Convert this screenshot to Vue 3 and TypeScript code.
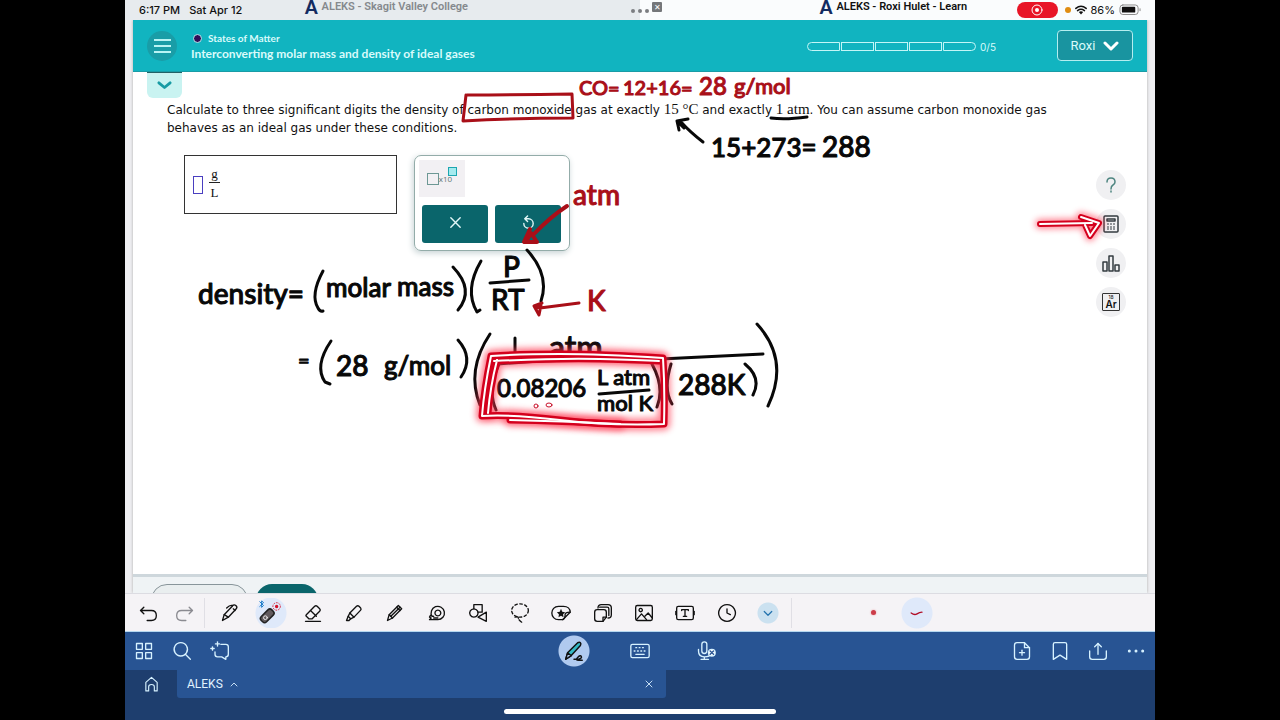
<script setup lang="ts">
import { ref } from 'vue'

interface Tool { name: string; paths: string[]; active?: boolean }

const answer = ref('')

const pens: Tool[] = [
  { name: 'Pen', paths: ['M3 21l2-7L15 3.500a2.500 2.500 0 0 1 4.500 3.500L10 17z', 'M5 14l5 3', 'M15 3c-3-1-5 1-7 3', 'M16 7l2 2'] },
  { name: 'Laser pointer', paths: [], active: true },
  { name: 'Eraser', paths: ['M7 19l-3-3q-1-1 0-2L14 4q1.500-1.500 3 0l3 3q1.500 1.500 0 3l-9 9H7z', 'M9 9l7 7', 'M3 22h18'] },
  { name: 'Highlighter', paths: ['M7 12l8-8q1.500-1.500 3 0l2 2q1 1.500 0 2.500L12 17z', 'M7 12l-2 4 3 3 4-2', 'M5 16l-2 5h3l2-2'] },
  { name: 'Pencil', paths: ['M3 21l2-7L16 3l4 4L9 18z', 'M5 14l4 4', 'M7 16L18 5', 'M14 5l4 4'] },
  { name: 'Tape', paths: ['M6 16a8 8 0 1 1 7 4H3l2-2-2-1 1-2 4 1', 'M13 8.500a3.500 3.500 0 1 0 .1 0z', 'M8 18h5'] },
  { name: 'Shapes', paths: ['M7 7a5 5 0 1 0 .1 0z', 'M7 7V2h10v9h-5', 'M22 11v11l-10-5z'] },
  { name: 'Lasso', paths: [] },
  { name: 'Sticker', paths: ['M14 20H9C4 20 1 16 1 12s3-8 8-8h6c5 0 8 3 8 7z', 'M23 11c-4 0-7 1-6 4 0 2-1 4-3 5'] },
  { name: 'Sticky notes', paths: ['M5 8h8q3 0 3 3v6l-4 5H5q-3 0-3-3v-8q0-3 3-3z', 'M12 22v-5h4', 'M6 6q0-4 4-4h8q4 0 4 4v8q0 4-4 4', 'M8 5h9q2 0 2 2v8'] },
  { name: 'Image', paths: ['M4 3h16q2 0 2 2v14q0 2-2 2H4q-2 0-2-2V5q0-2 2-2z', 'M8 6.500a2 2 0 1 0 .1 0z', 'M3 20l6-7 6 7', 'M13 16l4-4 5 6'] },
  { name: 'Text box', paths: ['M4 4h16q2 0 2 2v12q0 2-2 2H4q-2 0-2-2V6q0-2 2-2z', 'M8 9V8h8v1', 'M12 8v8', 'M10 16h4', 'M1 10v4', 'M23 10v4'] },
  { name: 'Timer', paths: ['M12 2a10 10 0 1 0 .1 0z', 'M12 7v5l4 2'] },
]

const barLeft: Tool[] = [
  { name: 'Overview', paths: ['M3 3h7v7H3z', 'M14 3h7v7h-7z', 'M3 14h7v7H3z', 'M14 14h7v7h-7z'] },
  { name: 'Search', paths: ['M10.500 2a8 8 0 1 0 .1 0z', 'M16 16l6 6'] },
  { name: 'Assistant', paths: ['M13 4h6q3 0 3 3v9q0 3-3 3v3l-5-3H9q-3 0-3-3v-3', 'M9 1v5', 'M6.500 3.500h5', 'M3 7v4', 'M1 9h4'] },
]
const barRight: Tool[] = [
  { name: 'Add page', paths: ['M6 2h9l6 6v11q0 3-3 3H6q-3 0-3-3V5q0-3 3-3z', 'M15 2v6h6', 'M12 11v6', 'M9 14h6'] },
  { name: 'Bookmark', paths: ['M6 2h12q2 0 2 2v18l-8-5-8 5V4q0-2 2-2z'] },
  { name: 'Share', paths: ['M2 12v7q0 3 3 3h14q3 0 3-3v-7', 'M12 16V3', 'M8 7l4-4 4 4'] },
]
const laserBox = [
  'M491 356Q520 354 560 354T663 358Q665 388 664 424Q610 426 560 420T482 416Q484 390 491 356',
  'M494 361Q560 358 600 359T659 361M497 360Q490 388 488 413M510 420Q560 421 620 424',
]
const laserArrow = 'M6 23L58 22M47 16L65 22L56 35L51 24'
</script>

<template>
  <div class="device">
    <header class="status">
      <div class="browser-tab idle"><b class="logo">A</b><span>ALEKS - Skagit Valley College</span></div>
      <div class="browser-tab"><b class="logo">A</b><span>ALEKS - Roxi Hulet - Learn</span></div>
      <div class="clock"><span>6:17 PM</span><span>Sat Apr 12</span></div>
      <div class="seam"><i></i><i></i><i></i><button aria-label="Close tab">✕</button></div>
      <div class="system">
        <span class="record"><svg viewBox="0 0 12 12"><circle cx="6" cy="6" r="5" fill="none" stroke="#fff" /><circle cx="6" cy="6" r="2" fill="#fff" /></svg></span>
        <i class="mic-dot"></i>
        <svg class="wifi" viewBox="0 0 14 11"><path d="M1 4q6-5 12 0M3 6.500q4-3 8 0" fill="none" stroke="#111" stroke-width="1.800" /><path d="M4.500 8.200q2.500-1.600 5 0L7 11z" fill="#111" /></svg>
        <span>86%</span>
        <svg class="battery" viewBox="0 0 23 12"><rect x="1" y="1" width="19" height="10" rx="3" fill="none" stroke="#888" /><rect x="3" y="3" width="14" height="6" rx="1" fill="#111" /><path d="M22 5v2" stroke="#888" /></svg>
      </div>
    </header>

    <main class="page">
      <div class="topic-bar">
        <button class="menu" aria-label="Menu"><i></i><i></i><i></i></button>
        <div class="topic">
          <span class="chapter"><i></i>States of Matter</span>
          <h1>Interconverting molar mass and density of ideal gases</h1>
        </div>
        <div class="progress"><i v-for="n in 5" :key="n"></i><span>0/5</span></div>
        <button class="user">Roxi <svg viewBox="0 0 16 12"><path d="M2 3l6 6 6-6" /></svg></button>
      </div>

      <section class="problem">
        <button class="pull" aria-label="Expand"><svg viewBox="0 0 16 12"><path d="M2 3l6 5 6-5" /></svg></button>
        <p class="question">
          Calculate to three significant digits the density of carbon monoxide gas at exactly
          <span class="math">15 °C</span> and exactly <span class="math">1 atm</span>. You can assume carbon monoxide gas
          behaves as an ideal gas under these conditions.
        </p>
        <div class="workspace">
          <label class="answer">
            <input v-model="answer" aria-label="Density in grams per litre" />
            <span class="unit"><span>g</span><span>L</span></span>
          </label>
          <div class="keypad">
            <button class="sci" aria-label="Scientific notation"><i></i><span>x10</span><i class="exp"></i></button>
            <div class="keys">
              <button aria-label="Clear"><svg viewBox="0 0 16 16"><path d="M3 3l10 10M13 3L3 13" /></svg></button>
              <button aria-label="Undo"><svg viewBox="0 0 16 16"><path d="M3 9a5 5 0 1 0 5-5H4M7 1L4 4l3 3" /></svg></button>
            </div>
          </div>
          <nav class="side">
            <button aria-label="Help"><svg viewBox="0 0 18 18"><path class="thin" d="M5 6q0-4 4-4t4 4q0 2-2 3t-2 4M9 15v1" /></svg></button>
            <button aria-label="Calculator">
              <svg viewBox="0 0 18 18"><rect x="2" y="1" width="14" height="16" rx="1" /><rect x="5" y="4" width="8" height="2" /><path stroke-linecap="butt" stroke-dasharray="2 1" d="M5 9h8M5 12h8M5 14h8" class="keydots" /></svg>
              <svg class="laser-arrow" viewBox="0 0 76 44">
                <path class="glow" :d="laserArrow" /><path class="beam" :d="laserArrow" /><path class="core" :d="laserArrow" />
              </svg>
            </button>
            <button aria-label="Data"><svg viewBox="0 0 18 18"><path d="M1 8h4v9H1zM7 2h4v15H7zM13 11h4v6h-4z" /></svg></button>
            <button aria-label="Periodic table"><span class="element"><small>18</small><b>Ar</b></span></button>
          </nav>
        </div>
      </section>

      <footer class="actions"><button aria-label="Explanation"></button><button class="check" aria-label="Check"></button></footer>
    </main>

    <div class="tools">
      <div class="history">
        <button aria-label="Undo stroke"><svg viewBox="0 0 24 24"><path d="M7 5L3 9l4 4M3 9h13q6 0 6 6t-6 6h-5" /></svg></button>
        <button class="off" aria-label="Redo stroke"><svg viewBox="0 0 24 24"><path d="M17 5l4 4-4 4M21 9H8q-6 0-6 6t6 6h5" /></svg></button>
      </div>
      <div class="pens">
        <button v-for="t in pens" :key="t.name" :class="{ active: t.active }" :aria-label="t.name">
          <svg v-if="t.name === 'Laser pointer'" class="big" viewBox="0 0 32 32">
            <rect x="4" y="15" width="16" height="8" rx="3" transform="rotate(-45 12 19)" fill="#625b5e" stroke="#222" />
            <circle cx="10" cy="21" r="2" fill="none" stroke="#eee" stroke-width="1" />
            <circle cx="22" cy="9" r="1" fill="#d3122a" stroke="#d3122a" />
            <circle cx="22" cy="9" r="4" stroke="#d3122a" stroke-width="1" stroke-dasharray="1 2" />
            <path d="M4 4l4 4-2 2V3l2 2-4 4" stroke="#1578c8" stroke-width="1" />
          </svg>
          <svg v-else viewBox="0 0 24 24">
            <path v-for="p in t.paths" :key="p" :d="p" />
            <template v-if="t.name === 'Lasso'"><ellipse cx="12" cy="9" rx="10" ry="8" stroke-dasharray="3 3" /><path d="M6 17q4-1 4 1t4 5" stroke-dasharray="5 2" /></template>
            <path v-if="t.name === 'Sticker'" d="M12 7l1.500 3.500 3.500.5-2.500 2.500.5 3.500-3-1.700L9 17l.5-3.500L7 11l3.500-.5z" class="solid" />
          </svg>
        </button>
        <button class="more" aria-label="More tools"><svg viewBox="0 0 24 24"><path d="M7 10l5 5 5-5" /></svg></button>
      </div>
      <div class="lasers">
        <button aria-label="Dot laser"><i></i></button>
        <button class="active" aria-label="Line laser"><svg viewBox="0 0 24 24"><path d="M5 12q4 3 7 1t6-2" /></svg></button>
      </div>
    </div>

    <div class="app-bar">
      <div class="group"><button v-for="t in barLeft" :key="t.name" :aria-label="t.name"><svg viewBox="0 0 24 24"><path v-for="p in t.paths" :key="p" :d="p" /></svg></button></div>
      <div class="group modes">
        <button class="pen-mode" aria-label="Pen mode"><svg viewBox="0 0 24 24"><path d="M3 21l2-7L16 3q2-1 3 0t0 3L9 17z" fill="#35b9c4" /><path d="M3 21l2-7 4 3z" fill="#b4cdf3" /><path d="M12 21h5q4-1 3-3t-4 1 1 3 4 0" /></svg></button>
        <button aria-label="Keyboard mode"><svg viewBox="0 0 24 24"><rect x="1" y="4" width="22" height="16" rx="2" /><path d="M7 8h11M5 12h14" stroke-dasharray="1 3" /><path d="M7 16h10" /></svg></button>
        <button aria-label="Microphone off"><svg viewBox="0 0 24 24"><rect x="7" y="1" width="6" height="14" rx="3" /><path d="M3 10v2q0 7 7 7t7-3M10 19v3M6 22h9" /><circle cx="19" cy="14" r="4" fill="#fff" /><path d="M17 12l4 4M21 12l-4 4" class="cut" /></svg></button>
      </div>
      <div class="group end">
        <button v-for="t in barRight" :key="t.name" :aria-label="t.name"><svg viewBox="0 0 24 24"><path v-for="p in t.paths" :key="p" :d="p" /></svg></button>
        <button aria-label="More"><svg viewBox="0 0 24 24" class="dots"><circle cx="4" cy="12" r="1" /><circle cx="12" cy="12" r="1" /><circle cx="20" cy="12" r="1" /></svg></button>
      </div>
    </div>

    <div class="doc-tabs">
      <button class="home" aria-label="Home"><svg viewBox="0 0 24 24"><path d="M4 9l8-7 8 7v12h-4v-6q0-3-4-3t-4 3v6H4z" /></svg></button>
      <div class="doc">
        <button>ALEKS <svg viewBox="0 0 10 8"><path d="M2 6l3-3 3 3" /></svg></button>
        <button class="close" aria-label="Close ALEKS"><svg viewBox="0 0 10 10"><path d="M2 2l6 6M8 2L2 8" /></svg></button>
      </div>
      <i class="home-bar"></i>
    </div>

    <svg class="ink" viewBox="125 0 1030 560">
      <g class="dark">
        <path d="M771 118Q785 120 807 117" />
        <path d="M703 142Q690 132 681 122M679 130L677 121L688 119M677 121L684 128" />
        <text x="711" y="157" class="m">15+273=</text><text x="822" y="157" class="l">288</text>
        <text x="198" y="304" class="l">density=</text>
        <path d="M323 271Q310 295 318 308Q320 312 323 311" /><text x="326" y="297" class="m">molar</text>
        <text x="397" y="296" class="m">mass</text><path d="M453 267Q475 290 458 310" />
        <path d="M481 261Q464 290 477 312L480 310" /><text x="503" y="277" class="l">P</text>
        <path d="M490 283L529 280" /><text x="491" y="310" class="l">RT</text>
        <path d="M527 250Q550 275 541 301" />
        <text x="298" y="367" class="s">=</text>
        <path d="M331 341Q314 366 325 382L330 384" /><text x="336" y="376" class="l">28</text><text x="384" y="375" class="m">g/mol</text>
        <path d="M458 340Q474 358 461 377M490 334Q466 370 480 405" />
        <path d="M515 338L515 356" /><text x="549" y="359" class="xl">atm</text>
        <path d="M497 364Q570 358 640 360L763 354" />
        <path d="M499 364Q487 390 496 410M652 364Q665 388 657 407M671 364Q663 390 672 404" />
        <text x="497" y="397" class="n">0.08206</text>
        <text x="597" y="385" class="t">L atm</text><path d="M599 394L649 390" /><text x="597" y="411" class="t">mol K</text>
        <text x="678" y="395" class="l">288K</text>
        <path d="M745 364Q762 378 753 395M757 324Q790 360 768 406" />
      </g>
      <g class="red">
        <path d="M467 95Q520 95 572 94L573 118Q520 118 463 121L466 95" />
        <text x="579" y="95" class="s">CO=</text><text x="623" y="95" class="s">12+16=</text><text x="699" y="95" class="n">28</text><text x="734" y="94" class="t">g/mol</text>
        <path d="M567 206Q550 217 533 235M530 229L524 242L537 242L531 233L527 240" class="heavy" />
        <text x="573" y="205" class="l">atm</text>
        <path d="M579 303L540 308M542 303L534 306L539 315L541 305L537 308" /><text x="587" y="311" class="l">K</text>
      </g>
      <path v-for="d in laserBox" :key="d" class="glow" :d="d" />
      <path v-for="d in laserBox" :key="d" class="beam" :d="d" />
      <path v-for="d in laserBox" :key="d" class="core" :d="d" />
      <g class="rings"><circle cx="536" cy="406" r="2" /><ellipse cx="549" cy="405" rx="3" ry="2" /></g>
    </svg>
  </div>
</template>

<style>
body { margin: 0; background: #000; }
</style>

<style scoped>
* { box-sizing: border-box; }
button { border: 0; padding: 0; margin: 0; background: none; font: inherit; color: inherit; display: flex; align-items: center; justify-content: center; cursor: pointer; }
svg { fill: none; stroke-linecap: round; stroke-linejoin: round; }
.device { position: relative; min-height: 100vh; margin: 0 125px; display: flex; flex-direction: column; background: #f0f0f3; overflow: hidden; font-family: Inter, "Liberation Sans", sans-serif; color: #111; }

.status { position: relative; display: flex; height: 20px; padding: 0 8px; background: linear-gradient(90deg, #e7ebee 50%, #fafcfd 50%); }
.browser-tab { flex: 1; display: flex; align-items: flex-start; justify-content: center; gap: 4px; font: 600 11px/13px Roboto, sans-serif; }
.browser-tab.idle { color: #85898d; }
.logo { font: 900 18px/14px Lato, sans-serif; color: #132b60; }
.clock { position: absolute; left: 14px; top: 3px; display: flex; gap: 9px; font: 500 11px/14px Inter, sans-serif; }
.seam { position: absolute; left: calc(50% - 9px); top: 1px; display: flex; align-items: center; gap: 3px; }
.seam i { width: 4px; height: 4px; margin-top: 8px; border-radius: 50%; background: #7b7e81; }
.seam button { width: 10px; height: 10px; background: #74777a; color: #fff; font-size: 8px; line-height: 10px; border-radius: 1px; }
.system { position: absolute; right: 14px; top: 2px; height: 16px; display: flex; align-items: center; gap: 4px; font-size: 11px; }
.record { width: 41px; height: 16px; margin-right: 3px; border-radius: 8px; background: #e81527; display: flex; align-items: center; justify-content: center; }
.record svg { width: 12px; }
.mic-dot { width: 6px; height: 6px; border-radius: 50%; background: #e08d12; }
.wifi { width: 12px; }
.battery { width: 22px; }

.page { flex: 1; margin: 0 8px; display: flex; flex-direction: column; background: #fff; box-shadow: 0 0 3px #aaa; }
.topic-bar { height: 52px; background: #11b4c0; color: #d9fbfb; display: flex; align-items: center; padding: 0 14px; border-bottom: 1px solid #199ca6; }
.menu { width: 30px; height: 30px; border-radius: 50%; background: #199da7; flex-direction: column; gap: 4px; }
.menu i { width: 17px; height: 2px; background: #b9f4f4; }
.topic { margin: 2px 0 0 14px; font-family: Lato, sans-serif; font-weight: 700; }
.chapter { display: flex; align-items: center; gap: 6px; font-size: 10px; line-height: 15px; margin-left: 2px; }
.chapter i { width: 9px; height: 9px; border-radius: 50%; background: #300d56; border: 1px solid #b5e9ee; }
h1 { margin: 0; font-size: 12px; line-height: 16px; font-weight: 700; }
.progress { margin: 2px 61px 0 auto; display: flex; gap: 1px; align-items: center; font: 10px/14px Inter, sans-serif; }
.progress i { width: 33px; height: 9px; border: 1px solid #c4f6f7; }
.progress i:first-child { border-radius: 5px 0 0 5px; }
.progress i:nth-child(5) { border-radius: 0 5px 5px 0; }
.progress span { margin-left: 3px; }
.user { width: 76px; height: 31px; gap: 8px; background: #1994a0; border: 1px solid #b4eef0; border-radius: 4px; font: 13px/16px Roboto, sans-serif; }
.user svg { width: 16px; stroke: #fff; stroke-width: 3; }

.problem { flex: 1; }
.pull { width: 35px; height: 26px; margin-left: 14px; background: #c9f3f1; border-top: 1px solid #236267; border-radius: 0 0 6px 6px; }
.pull svg { width: 15px; stroke: #189ba4; stroke-width: 3; }
.question { margin: 3px 90px 0 34px; font: 12px/18px "DejaVu Sans", Verdana, sans-serif; color: #111; }
.math { font: 15px/16px "Liberation Serif", serif; }
.workspace { display: flex; align-items: flex-start; margin: 18px 21px 0 51px; }
.answer { width: 213px; height: 59px; border: 1px solid #333; display: flex; align-items: center; padding-left: 8px; gap: 6px; }
.answer input { width: 10px; height: 18px; padding: 0; border: 1px solid #4a3fc0; background: #fff; outline: 0; }
.unit { display: flex; flex-direction: column; width: 11px; text-align: center; font: 13px/20px "Liberation Serif", serif; }
.unit span:first-child { border-bottom: 1px solid #222; line-height: 16px; }
.keypad { width: 156px; margin-left: 17px; padding: 4px 8px 7px 7px; border: 1px solid #93aca9; border-radius: 7px; box-shadow: -1px 2px 6px #c6d2d4; }
.sci { width: 46px; height: 37px; margin-left: -3px; background: #f2f0f3; font: 8px/10px "Open Sans", sans-serif; color: #5c7472; }
.sci i { width: 12px; height: 12px; border: 1px solid #6d9894; }
.sci .exp { width: 9px; height: 9px; margin: -14px 0 0 -4px; border-color: #1ca6b0; background: #a4eaee; }
.keys { display: flex; gap: 7px; margin-top: 8px; }
.keys button { flex: 1; height: 38px; padding-bottom: 3px; background: #0a656b; border-radius: 3px; }
.keys svg { width: 15px; stroke: #e2f7f7; stroke-width: 1.500; }
.side { margin: 15px 0 0 auto; display: flex; flex-direction: column; gap: 9px; }
.side button { position: relative; width: 30px; height: 30px; border-radius: 50%; background: #f0f0f2; }
.side svg { width: 18px; stroke: #333b40; stroke-width: 1.500; }
.side .thin { stroke: #4e8580; }
.keydots { stroke-width: 1; }
.side .laser-arrow { position: absolute; right: 16px; top: -8px; width: 76px; height: 44px; overflow: visible; }
.element { width: 18px; height: 18px; border: 1px solid #333; border-radius: 1px; display: flex; flex-direction: column; align-items: center; }
.element small { font-size: 5px; line-height: 6px; }
.element b { font-size: 10px; line-height: 9px; font-weight: 600; }
.glow { fill: none; stroke: #ff3850; stroke-width: 13; filter: blur(3px); opacity: .6; }
.laser-arrow .glow { stroke: #ff3850; stroke-width: 10; }
.beam { fill: none; stroke: #d4001d; stroke-width: 7; }
.laser-arrow .beam { stroke: #d4001d; stroke-width: 6; }
.core { fill: none; stroke: #fff; stroke-width: 2; }
.laser-arrow .core { stroke: #fff; stroke-width: 2; }

.actions { height: 19px; padding: 7px 18px 0; border-top: 3px solid #ced7dc; background: #eff3f5; display: flex; gap: 8px; overflow: hidden; }
.actions button { width: 97px; height: 32px; border: 1px solid #88959a; border-radius: 16px; background: #e9eeef; }
.actions .check { width: 62px; background: #0a656b; border: 0; }

.tools { height: 39px; display: flex; align-items: center; background: #f5f3f6; border-top: 1px solid #dcdce2; border-bottom: 1px solid #b5d7ef; }
.tools svg { width: 20px; height: 20px; stroke: #111; stroke-width: 1.600; }
.tools .solid { fill: #111; stroke: none; }
.history { display: flex; padding: 0 1px 0 4px; border-right: 1px solid #e0dfe5; }
.history button { width: 37px; height: 30px; }
.history .off svg { stroke: #8b8b91; }
.pens { display: flex; width: 587px; padding: 0 2px 0 4px; border-right: 1px solid #e0dfe5; }
.pens button { flex: 1; height: 30px; }
.pens .active, .lasers .active { background: radial-gradient(circle, #dfe9fa 15px, transparent 16px); }
.tools .big { width: 30px; height: 30px; }
.pens .more { background: radial-gradient(circle, #cbe1f0 10px, transparent 11px); }
.pens .more svg { width: 18px; stroke: #2272ae; }
.lasers { display: flex; margin-left: 59px; }
.lasers button { width: 44px; height: 32px; }
.lasers i { width: 5px; height: 5px; border-radius: 50%; background: #cc3c49; box-shadow: 0 0 2px #e9979d; }
.tools .lasers svg { stroke: #b20d26; }

.app-bar { height: 38px; display: grid; grid-template-columns: 1fr auto 1fr; background: #285493; }
.group { display: flex; align-items: center; }
.group.end { justify-content: flex-end; }
.group button { width: 38px; height: 32px; }
.group svg { width: 20px; height: 20px; stroke: #d7f2ff; stroke-width: 1.600; }
.modes button { width: 66px; }
.group .pen-mode { background: radial-gradient(circle, #b0caef 15px, transparent 16px); }
.group .pen-mode svg { stroke: #111; width: 22px; height: 22px; }
.cut { stroke: #285493; }
.dots { fill: #d7f2ff; }
.doc-tabs { position: relative; height: 50px; display: flex; align-items: flex-start; background: #1e3e6e; color: #e0f3ff; }
.home { width: 52px; height: 28px; }
.home svg { width: 17px; stroke: #d7f2ff; stroke-width: 1.600; }
.doc { width: 489px; height: 28px; padding: 0 12px 0 10px; display: flex; align-items: center; justify-content: space-between; background: #285493; border-radius: 0 0 3px 3px; font: 12px/16px Roboto, sans-serif; }
.doc button { gap: 6px; }
.doc svg { width: 10px; stroke: #c5def4; }
.home-bar { position: absolute; left: calc(50% - 136px); bottom: 6px; width: 272px; height: 5px; border-radius: 3px; background: #fff; }

.ink { position: absolute; left: 0; top: 0; width: 1030px; height: 560px; overflow: visible; pointer-events: none; font-family: Lato, sans-serif; font-weight: 500; }
.ink path { stroke-width: 3; }
.dark path { stroke: #080808; }
.dark text { fill: #080808; stroke: #080808; stroke-width: 1; }
.red path { stroke: #a90f18; }
.red text { fill: #a90f18; stroke: #a90f18; stroke-width: 1; }
.ink .heavy { stroke-width: 4; }
.ink .glow { stroke-width: 13; }
.ink .beam { stroke-width: 7; }
.ink .core { stroke-width: 2; }
.s { font-size: 20px; }
.t { font-size: 22px; }
.n { font-size: 24px; }
.m { font-size: 26px; }
.l { font-size: 28px; }
.xl { font-size: 32px; }
.rings circle, .rings ellipse { stroke: #c8102a; stroke-width: 1; }
</style>
